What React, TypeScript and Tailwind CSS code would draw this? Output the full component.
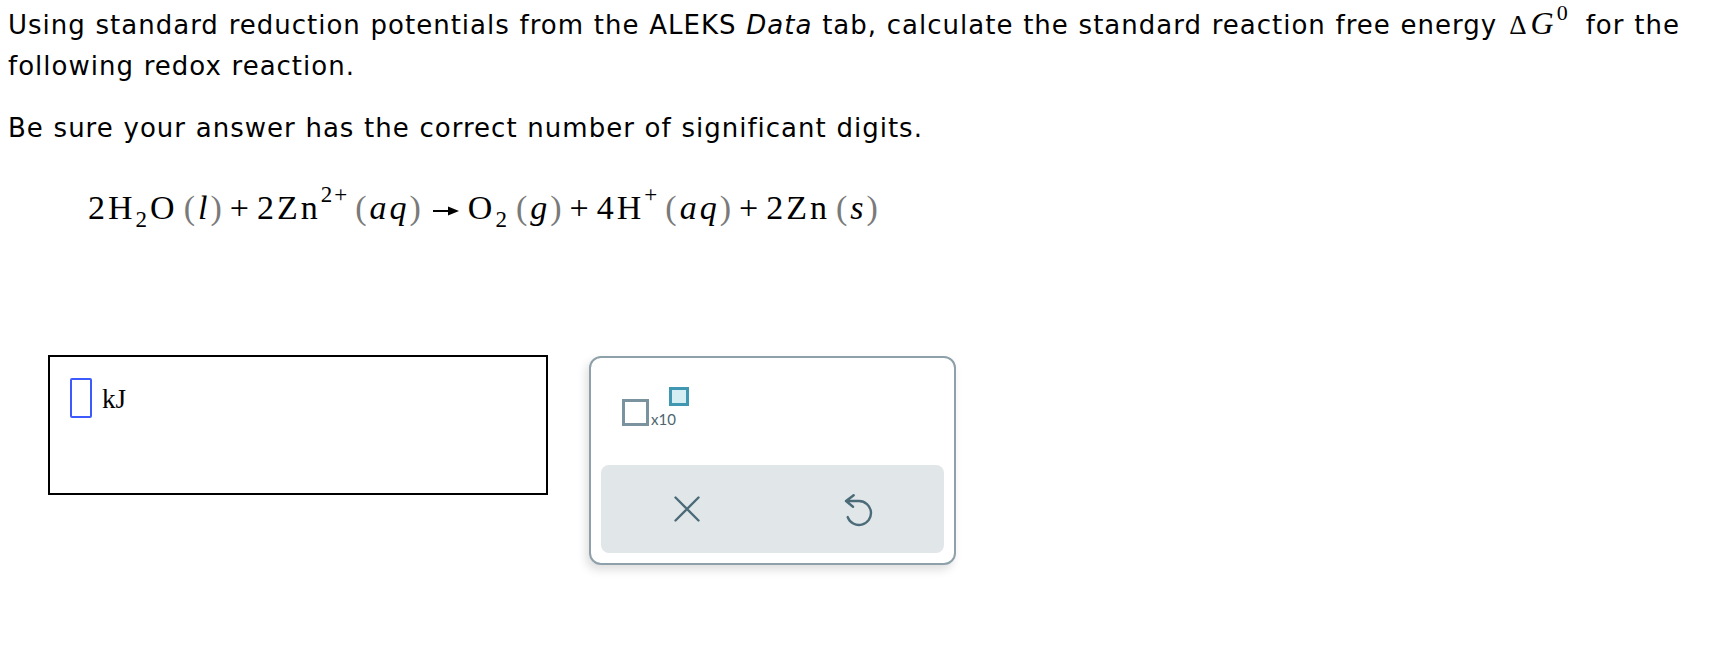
import React from "react";

const serif = { fontFamily: '"Liberation Serif", "Times New Roman", serif' };

const Paren = ({ children }: { children: React.ReactNode }) => (
  <span className="text-[#7a7a7a]">{children}</span>
);

const State = ({ s }: { s: string }) => (
  <span className="ml-[6px]">
    <Paren>(</Paren>
    <i className="tracking-[3px]">{s}</i>
    <Paren>)</Paren>
  </span>
);

const Sup = ({ children }: { children: React.ReactNode }) => (
  <span className="inline-block relative -top-[17px] text-[23px] leading-none tracking-[2px]">
    {children}
  </span>
);

const Sub = ({ children }: { children: React.ReactNode }) => (
  <span className="inline-block relative top-[8px] text-[23px] leading-none">
    {children}
  </span>
);

const Plus = () => <span className="mx-[5px]">+</span>;

const ClearIcon = () => (
  <svg width="26" height="26" viewBox="0 0 26 26" fill="none">
    <path
      d="M1.5 1.5 L24.5 24.5 M24.5 1.5 L1.5 24.5"
      stroke="#4b6b78"
      strokeWidth="2.4"
      strokeLinecap="round"
    />
  </svg>
);

const UndoIcon = () => (
  <svg width="30" height="36" viewBox="0 0 30 36" fill="none">
    <path
      d="M3 10 L16 10 A12 12 0 1 1 4.7 26.1 M10.7 4.3 L3 10 L10 15.7"
      stroke="#4b6b78"
      strokeWidth="2.4"
      strokeLinecap="round"
      strokeLinejoin="round"
    />
  </svg>
);

export default function App() {
  return (
    <div
      className="w-[1720px] h-[664px] bg-white text-black pl-2 pt-[3px] overflow-hidden"
      style={{ fontFamily: '"DejaVu Sans", Verdana, sans-serif' }}
    >
      {/* Question */}
      <p className="text-[26px] leading-[40px] whitespace-nowrap tracking-[1px] [word-spacing:0.5px]">
        Using standard reduction potentials from the ALEKS <i>Data</i> tab,
        calculate the standard reaction free energy
        <span style={serif} className="whitespace-nowrap ml-[12px] tracking-[2px]">
          <span className="text-[27px]">Δ</span>
          <i className="text-[32px] ml-[2px]">G</i>
          <span className="inline-block relative -top-[14px] text-[22px] leading-none ml-[1px]">
            0
          </span>
        </span>
        <span className="ml-[16px]">for the</span>
        <br />
        following redox reaction.
      </p>
      <p className="mt-[22px] text-[26px] leading-[40px] tracking-[1px] [word-spacing:0.5px]">
        Be sure your answer has the correct number of significant digits.
      </p>

      {/* Equation */}
      <div
        style={serif}
        className="mt-[40px] pl-[80px] text-[34px] leading-[40px] whitespace-nowrap tracking-[3px]"
      >
        2H<Sub>2</Sub>O<State s="l" />
        <Plus />
        2Zn<Sup>2+</Sup>
        <State s="aq" />
        <svg
          width="28"
          height="12"
          viewBox="0 0 28 12"
          className="inline-block mx-[8px] align-middle"
        >
          <path d="M1 6 H18" stroke="#000" strokeWidth="2" />
          <path d="M16 1.5 L27 6 L16 10.5 Z" fill="#000" />
        </svg>
        O<Sub>2</Sub>
        <State s="g" />
        <Plus />
        4H<Sup>+</Sup>
        <State s="aq" />
        <Plus />
        2Zn
        <State s="s" />
      </div>

      {/* Answer row */}
      <div className="mt-[127px] pl-[40px] flex items-start gap-[41px]">
        <div className="w-[500px] h-[140px] border-2 border-black pl-[20px] pt-[21px] flex items-start">
          <div className="w-[22px] h-[40px] border-2 border-[#3d5afe] rounded-[2px]" />
          <span style={serif} className="ml-[10px] mt-[6px] text-[27px] leading-[30px]">
            kJ
          </span>
        </div>

        <div className="mt-[1px] w-[367px] h-[209px] border-2 border-[#8ea0a9] rounded-[12px] bg-white p-[10px] flex flex-col shadow-[-3px_5px_10px_rgba(0,0,0,0.13)]">
          <div className="h-[97px] pl-[21px] pt-[19px] flex items-start">
            <div className="mt-[12px] w-[27px] h-[27px] border-[3px] border-[#7b939e]" />
            <span
              className="mt-[25px] ml-[2px] text-[15px] leading-none text-[#4e6570]"
              style={{ fontFamily: "Lato, sans-serif" }}
            >
              x10
            </span>
            <div className="-ml-[7px] w-[20px] h-[19px] border-[3px] border-[#3f97b2] bg-[#d5eef4]" />
          </div>
          <div className="flex-1 bg-[#e1e6e9] rounded-[8px] flex">
            <button className="flex-1 flex items-center justify-center">
              <ClearIcon />
            </button>
            <button className="flex-1 flex items-center justify-center">
              <UndoIcon />
            </button>
          </div>
        </div>
      </div>
    </div>
  );
}
